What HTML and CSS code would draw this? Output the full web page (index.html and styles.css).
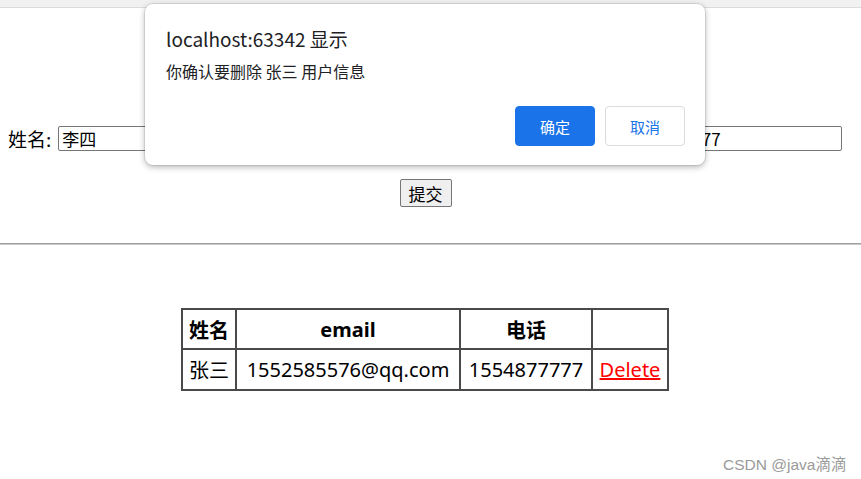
FILE: index.html
```html
<!DOCTYPE html>
<html lang="zh">
<head>
<meta charset="utf-8">
<title>用户管理</title>
<link rel="stylesheet" href="styles.css">
</head>
<body>
<div class="topbar"></div>
<form class="user-form">
  <div class="fields">
    <label class="field"><span class="lbl">姓名:</span><input class="inp" type="text" value="李四"></label>
    <label class="field"><span class="lbl">email:</span><input class="inp" type="text" value="1552585576@qq.com"></label>
    <label class="field"><span class="lbl">电话:</span><input class="inp inp-right" type="text" value="1554877777"></label>
  </div>
  <div class="submit-row"><button type="button" class="submit">提交</button></div>
</form>
<hr class="divider">
<table class="users">
  <colgroup>
    <col class="c1"><col class="c2"><col class="c3"><col class="c4">
  </colgroup>
  <thead>
    <tr><th>姓名</th><th>email</th><th>电话</th><th></th></tr>
  </thead>
  <tbody>
    <tr><td>张三</td><td>1552585576@qq.com</td><td>1554877777</td><td><a href="#" class="del">Delete</a></td></tr>
  </tbody>
</table>
<div class="watermark">CSDN @java滴滴</div>

<div class="dialog">
  <div class="dlg-title">localhost:63342 显示</div>
  <div class="dlg-msg">你确认要删除 张三 用户信息</div>
  <div class="dlg-actions">
    <button type="button" class="btn btn-primary">确定</button>
    <button type="button" class="btn btn-secondary">取消</button>
  </div>
</div>
</body>
</html>
```

FILE: styles.css
```css
html, body {
  margin: 0;
  padding: 0;
  background: #fff;
}
body {
  font-family: "Noto Sans", "Noto Sans CJK SC", sans-serif;
  color: #000;
  position: relative;
  width: 861px;
  height: 479px;
  overflow: hidden;
}
.topbar {
  height: 7px;
  background: #f1f1f1;
  border-bottom: 1px solid #dcdcdc;
}
.user-form {
  padding-top: 118px;
}
.fields {
  display: flex;
  align-items: center;
  height: 25px;
  padding-left: 8px;
  gap: 6px;
}
.field {
  display: flex;
  align-items: center;
  gap: 7px;
  font-size: 19px;
  font-family: "Noto Sans CJK SC", sans-serif;
}
.lbl {
  line-height: 25px;
}
.inp {
  box-sizing: border-box;
  width: 220px;
  height: 25px;
  border: 1px solid #767676;
  border-radius: 2px;
  padding: 0 3px;
  font-size: 17px;
  font-family: "Noto Sans CJK SC", sans-serif;
  color: #000;
  background: #fff;
}
.submit-row {
  margin-top: 28px;
  display: flex;
  justify-content: center;
  padding-right: 10px;
}
.submit {
  box-sizing: border-box;
  width: 52px;
  height: 28px;
  font-size: 17px;
  font-family: "Noto Sans CJK SC", sans-serif;
  background: #efefef;
  border: 1px solid #767676;
  border-radius: 2px;
  padding: 0;
  color: #000;
}
.divider {
  margin: 36px 0 0 0;
  height: 0;
  border: 0;
  border-top: 1px solid #a0a0a0;
  border-bottom: 1px solid #c8c8c8;
}
.users {
  margin: 63px 0 0 181px;
  border-collapse: collapse;
  table-layout: fixed;
  width: 486px;
  border: 2px solid #4a4a4a;
  font-family: "Noto Sans", "Noto Sans CJK SC", sans-serif;
  font-size: 20px;
}
.c1 { width: 54px; }
.c2 { width: 224px; }
.c3 { width: 132px; }
.c4 { width: 76px; }
.users th, .users td {
  border: 2px solid #4a4a4a;
  height: 38px;
  padding: 0;
  text-align: center;
  white-space: nowrap;
}
.users td {
  height: 39px;
}
.users th {
  font-weight: bold;
}
.del {
  color: #ff0000;
  text-decoration: underline;
}
.watermark {
  position: absolute;
  left: 723px;
  top: 452px;
  font-size: 15.5px;
  color: #9a9a9a;
  font-family: "Liberation Sans", "Noto Sans CJK SC", sans-serif;
}
.dialog {
  position: absolute;
  left: 145px;
  top: 4px;
  width: 560px;
  height: 161px;
  box-sizing: border-box;
  background: #fff;
  border-radius: 8px;
  box-shadow: 0 0 0 1px rgba(0, 0, 0, 0.08), 0 2px 6px rgba(0, 0, 0, 0.3);
  padding: 22px 20px 19px 21px;
  display: flex;
  flex-direction: column;
  font-family: "Noto Sans CJK SC", sans-serif;
}
.dlg-title {
  font-size: 19px;
  line-height: 26px;
  color: #202124;
}
.dlg-msg {
  margin-top: 8px;
  font-size: 16px;
  line-height: 22px;
  color: #202124;
}
.dlg-actions {
  margin-top: auto;
  display: flex;
  justify-content: flex-end;
  gap: 10px;
}
.btn {
  box-sizing: border-box;
  width: 80px;
  height: 40px;
  border-radius: 4px;
  font-size: 15px;
  font-family: "Noto Sans CJK SC", sans-serif;
  padding: 0;
}
.btn-primary {
  background: #1a73e8;
  border: 1px solid #1a73e8;
  color: #fff;
}
.btn-secondary {
  background: #fff;
  border: 1px solid #dadce0;
  color: #1a73e8;
}
```
